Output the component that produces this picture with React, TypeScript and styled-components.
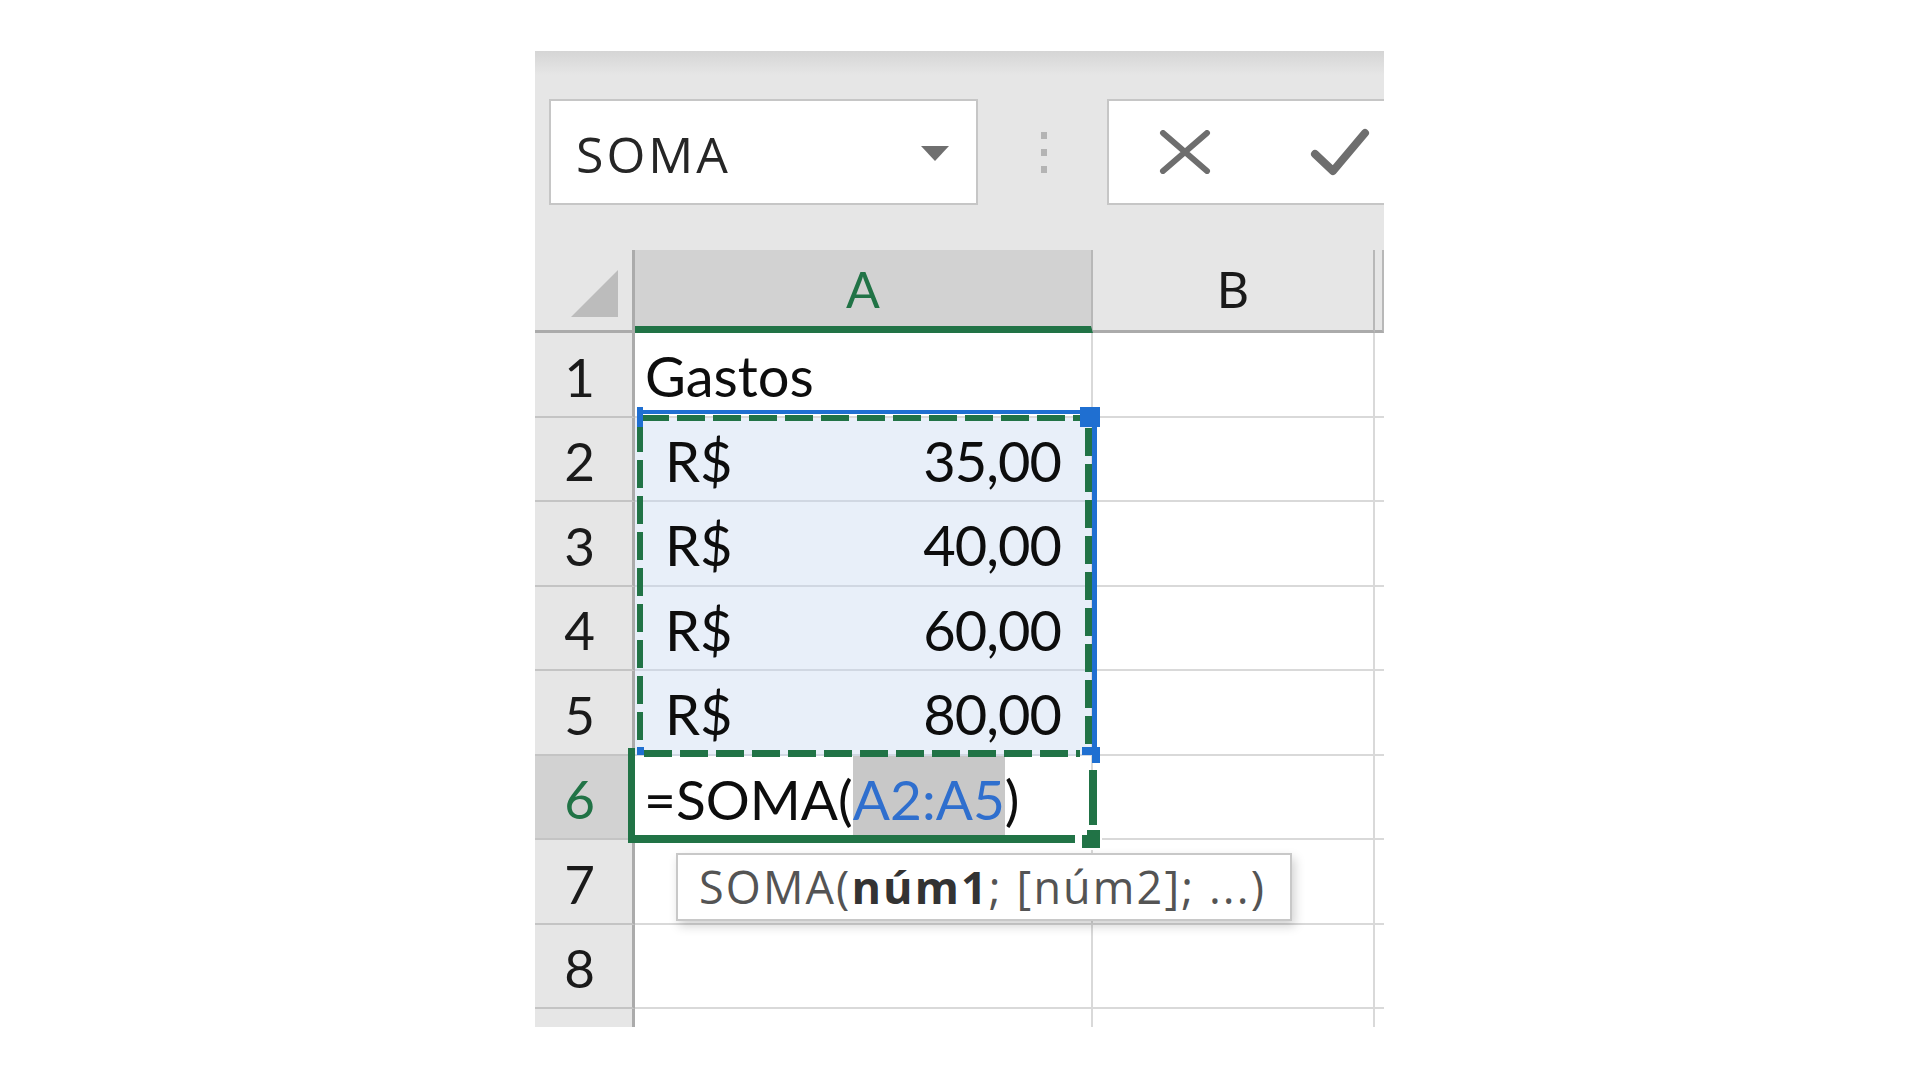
import styled, { createGlobalStyle } from 'styled-components';

const GlobalStyle = createGlobalStyle`
  html, body {
    margin: 0;
    padding: 0;
    background: #ffffff;
  }
  body {
    width: 1920px;
    height: 1080px;
    overflow: hidden;
    font-family: Lato, "Liberation Sans", sans-serif;
  }
`;

const GREEN = '#217346';
const BLUE = '#1f6fd1';
const COLS = '100px 458px 282px 1fr';

const Page = styled.div`
  padding: 51px 0 0 535px;
`;

const Window = styled.div`
  position: relative;
  width: 849px;
  height: 976px;
  overflow: hidden;
  background: #e6e6e6;
  display: flex;
  flex-direction: column;
`;

const Toolbar = styled.div`
  flex: none;
  height: 199px;
  box-sizing: border-box;
  padding: 48px 0 0 14px;
  display: flex;
  align-items: flex-start;
  overflow: hidden;
  background: linear-gradient(#d5d5d5 0px, #e6e6e6 24px);
`;

const NameBox = styled.div`
  flex: none;
  width: 429px;
  height: 106px;
  box-sizing: border-box;
  border: 2px solid #c6c6c6;
  background: #ffffff;
  display: flex;
  align-items: center;
  justify-content: space-between;
  padding: 3px 27px 0 25px;
  font-family: "Open Sans", "Noto Sans", sans-serif;
  font-size: 50px;
  letter-spacing: 3px;
  color: #262626;
`;

const Grip = styled.div`
  flex: none;
  height: 106px;
  margin: 0 60px 0 63px;
  display: flex;
  flex-direction: column;
  justify-content: center;
  gap: 10px;
`;

const GripDot = styled.span`
  width: 6px;
  height: 7px;
  background: #b4b4b4;
`;

const FormulaBox = styled.div`
  flex: none;
  width: 420px;
  height: 106px;
  box-sizing: border-box;
  border: 2px solid #c6c6c6;
  background: #ffffff;
  display: flex;
  align-items: center;
  padding-left: 50px;
  gap: 99px;
`;

const HeaderRow = styled.div`
  flex: none;
  display: grid;
  grid-template-columns: ${COLS};
  height: 83px;
`;

const Corner = styled.div`
  box-sizing: border-box;
  display: flex;
  align-items: flex-end;
  justify-content: flex-end;
  padding: 0 14px 13px 0;
  border-right: 3px solid #ababab;
  border-bottom: 3px solid #ababab;
`;

const ColHead = styled.div<{ $active?: boolean }>`
  box-sizing: border-box;
  display: flex;
  justify-content: center;
  align-items: flex-start;
  padding-top: 9px;
  background: ${(p) => (p.$active ? '#d2d2d2' : '#e6e6e6')};
  border-right: 2px solid #b8b8b8;
  border-bottom: ${(p) => (p.$active ? `7px solid ${GREEN}` : '3px solid #ababab')};
  color: ${(p) => (p.$active ? GREEN : '#1a1a1a')};
  font-size: 50px;
  line-height: 60px;
`;

const Row = styled.div`
  flex: none;
  display: grid;
  grid-template-columns: ${COLS};
  height: 84.5px;
`;

const RowHead = styled.div<{ $active?: boolean }>`
  box-sizing: border-box;
  display: flex;
  justify-content: center;
  align-items: flex-end;
  padding: 0 8px 7px 0;
  background: ${(p) => (p.$active ? '#d2d2d2' : '#e6e6e6')};
  border-right: 3px solid #ababab;
  border-bottom: 2px solid #c4c4c4;
  color: ${(p) => (p.$active ? GREEN : '#1a1a1a')};
  font-size: 53px;
  line-height: 1.2;
`;

const Cell = styled.div<{ $range?: boolean; $money?: boolean }>`
  box-sizing: border-box;
  display: flex;
  align-items: flex-end;
  justify-content: space-between;
  padding: ${(p) => (p.$money ? '0 30px 6px 30px' : '0 8px 6px 10px')};
  background: ${(p) => (p.$range ? '#e8eff9' : '#ffffff')};
  border-right: 2px solid #d9d9d9;
  border-bottom: 2px solid ${(p) => (p.$range ? '#d0d7e2' : '#d9d9d9')};
  color: #0d0d0d;
  font-size: 56px;
  line-height: 1.2;
  white-space: nowrap;
`;

const Amount = styled.span`
  letter-spacing: -1px;
`;

const FormulaCell = styled(Cell)`
  align-items: stretch;
  justify-content: flex-start;
  padding: 0 0 0 9px;
  font-size: 55px;
`;

const Part = styled.span<{ $ref?: boolean }>`
  display: flex;
  align-items: flex-end;
  padding-bottom: 6px;
  background: ${(p) => (p.$ref ? '#c8c8c8' : 'transparent')};
  color: ${(p) => (p.$ref ? '#2f6fce' : '#0d0d0d')};
`;

const Overlay = styled.svg`
  position: absolute;
  left: 85px;
  top: 349px;
  pointer-events: none;
`;

const Tooltip = styled.div`
  position: absolute;
  left: 141px;
  top: 802px;
  width: 616px;
  height: 68px;
  box-sizing: border-box;
  border: 2px solid #c8c8c8;
  background: #ffffff;
  box-shadow: 3px 5px 10px rgba(0, 0, 0, 0.18);
  display: flex;
  align-items: center;
  padding: 0 0 2px 21px;
  font-family: "Open Sans", "Noto Sans", sans-serif;
  font-size: 45px;
  letter-spacing: 2.1px;
  color: #545454;
  white-space: nowrap;
`;

const Bold = styled.b`
  font-weight: 700;
  color: #333333;
`;

type Money = { value: string };
const amounts: Money[] = [
  { value: '35,00' },
  { value: '40,00' },
  { value: '60,00' },
  { value: '80,00' },
];

const DropArrow = () => (
  <svg width="28" height="15" viewBox="0 0 28 15">
    <polygon points="0,0 28,0 14,15" fill="#6f6f6f" />
  </svg>
);

const CancelIcon = () => (
  <svg width="52" height="44" viewBox="0 0 52 44">
    <path d="M4 3 L48 41 M48 3 L4 41" stroke="#6e6e6e" strokeWidth="6" strokeLinecap="round" fill="none" />
  </svg>
);

const EnterIcon = () => (
  <svg width="60" height="50" viewBox="0 0 60 50">
    <polyline points="5,27 23,44 55,6" stroke="#6e6e6e" strokeWidth="8" strokeLinejoin="round" strokeLinecap="round" fill="none" />
  </svg>
);

const SelectAll = () => (
  <svg width="47" height="47" viewBox="0 0 47 47">
    <polygon points="47,0 47,47 0,47" fill="#bcbcbc" />
  </svg>
);

// marching ants around A2:A5 and the active cell A6 (origin = 620,400 on the page)
const SelectionMarks = () => {
  const dash = '28 8';
  return (
    <Overlay width="490" height="460" viewBox="0 0 490 460">
      <rect x="17" y="10" width="458" height="4" fill={BLUE} />
      <rect x="472" y="10" width="5" height="345" fill={BLUE} />
      <line x1="21" y1="18" x2="462" y2="18" stroke={GREEN} strokeWidth="6" strokeDasharray={dash} />
      <line x1="20" y1="24" x2="20" y2="350" stroke={GREEN} strokeWidth="6" strokeDasharray={dash} />
      <line x1="468.5" y1="28" x2="468.5" y2="350" stroke={GREEN} strokeWidth="7" strokeDasharray={dash} />
      <line x1="24" y1="353.5" x2="460" y2="353.5" stroke={GREEN} strokeWidth="7" strokeDasharray={dash} />
      <rect x="8" y="348" width="7" height="95" fill={GREEN} />
      <rect x="8" y="435" width="447" height="8" fill={GREEN} />
      <line x1="473" y1="370" x2="473" y2="425" stroke={GREEN} strokeWidth="8" />
      <rect x="455" y="425" width="27" height="25" fill="#ffffff" />
      <rect x="462" y="430" width="18" height="18" fill={GREEN} />
      <rect x="462" y="430" width="5" height="5" fill="#ffffff" />
      <rect x="17" y="7" width="6" height="20" fill={BLUE} />
      <rect x="460" y="7" width="20" height="20" fill={BLUE} />
      <rect x="17" y="347" width="7" height="8" fill={BLUE} />
      <rect x="462" y="347" width="18" height="8" fill={BLUE} />
      <rect x="472" y="347" width="8" height="16" fill={BLUE} />
    </Overlay>
  );
};

const App = () => {
  return (
    <Page>
      <GlobalStyle />
      <Window>
        <Toolbar>
          <NameBox>
            <span>SOMA</span>
            <DropArrow />
          </NameBox>
          <Grip>
            <GripDot />
            <GripDot />
            <GripDot />
          </Grip>
          <FormulaBox>
            <CancelIcon />
            <EnterIcon />
          </FormulaBox>
        </Toolbar>

        <HeaderRow>
          <Corner>
            <SelectAll />
          </Corner>
          <ColHead $active>A</ColHead>
          <ColHead>B</ColHead>
          <ColHead />
        </HeaderRow>

        <Row>
          <RowHead>1</RowHead>
          <Cell>Gastos</Cell>
          <Cell />
          <Cell />
        </Row>

        {amounts.map((a, i) => (
          <Row key={a.value}>
            <RowHead>{i + 2}</RowHead>
            <Cell $range $money>
              <span>R$</span>
              <Amount>{a.value}</Amount>
            </Cell>
            <Cell />
            <Cell />
          </Row>
        ))}

        <Row>
          <RowHead $active>6</RowHead>
          <FormulaCell>
            <Part>=SOMA(</Part>
            <Part $ref>A2:A5</Part>
            <Part>)</Part>
          </FormulaCell>
          <Cell />
          <Cell />
        </Row>

        {[7, 8].map((n) => (
          <Row key={n}>
            <RowHead>{n}</RowHead>
            <Cell />
            <Cell />
            <Cell />
          </Row>
        ))}

        {/* row 9, only its top edge is visible */}
        <Row>
          <RowHead />
          <Cell />
          <Cell />
          <Cell />
        </Row>

        <SelectionMarks />

        <Tooltip>
          SOMA(<Bold>núm1</Bold>; [núm2]; ...)
        </Tooltip>
      </Window>
    </Page>
  );
};

export default App;
